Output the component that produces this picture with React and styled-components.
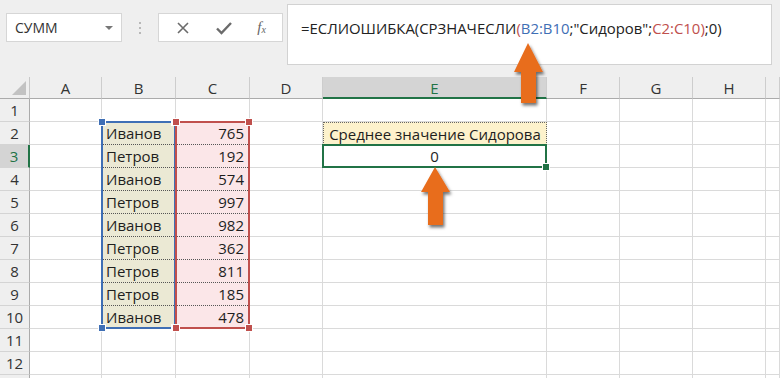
import React from "react";
import styled, { createGlobalStyle } from "styled-components";

const GlobalStyle = createGlobalStyle`
  html, body {
    margin: 0;
    padding: 0;
    background: #efefef;
    font-family: "Open Sans", "Liberation Sans", sans-serif;
    overflow: hidden;
  }
`;

const columns = ["A", "B", "C", "D", "E", "F", "G", "H", ""];
const data = [
  ["Иванов", 765],
  ["Петров", 192],
  ["Иванов", 574],
  ["Петров", 997],
  ["Иванов", 982],
  ["Петров", 362],
  ["Петров", 811],
  ["Петров", 185],
  ["Иванов", 478],
];

function App() {
  const rows = Array.from({ length: 13 }, (_, i) => i + 1);

  return (
    <Page>
      <GlobalStyle />
      <Toolbar>
        <NameBox>
          <span>СУММ</span>
          <Caret />
        </NameBox>
        <Grip>
          <i />
          <i />
          <i />
        </Grip>
        <ButtonBox>
          <ToolIcon>
            <svg width="16" height="16" viewBox="0 0 16 16">
              <path d="M3 3 L13 13 M13 3 L3 13" stroke="#6b6b6b" strokeWidth="1.6" fill="none" />
            </svg>
          </ToolIcon>
          <ToolIcon>
            <svg width="18" height="16" viewBox="0 0 18 16">
              <path d="M2 8.5 L6.5 13 L16 3" stroke="#6b6b6b" strokeWidth="2.4" fill="none" />
            </svg>
          </ToolIcon>
          <Fx>
            f<sub>x</sub>
          </Fx>
        </ButtonBox>
        <FormulaBar>
          =ЕСЛИОШИБКА(СРЗНАЧЕСЛИ<Ref color="#c0504d">(</Ref>
          <Ref color="#3f6fb5">B2:B10</Ref>;"Сидоров";
          <Ref color="#c0504d">C2:C10</Ref>
          <Ref color="#c0504d">)</Ref>;0)
        </FormulaBar>
      </Toolbar>

      <SheetWrap>
        <Sheet>
          <Corner />
          {columns.map((c, i) => (
            <ColHeader key={c + i} $active={c === "E"}>
              {c}
            </ColHeader>
          ))}

          {rows.map((r) => (
            <React.Fragment key={r}>
              <RowHeader $active={r === 3}>{r <= 12 ? r : ""}</RowHeader>
              {columns.map((c, ci) => {
                const d = data[r - 2];
                if (c === "B" && d)
                  return (
                    <NameCell key={ci} $last={r === 10}>
                      {d[0]}
                    </NameCell>
                  );
                if (c === "C" && d)
                  return (
                    <ValueCell key={ci} $last={r === 10}>
                      {d[1]}
                    </ValueCell>
                  );
                if (c === "E" && r === 2)
                  return <TitleCell key={ci}>Среднее значение Сидорова</TitleCell>;
                if (c === "E" && r === 3)
                  return <ResultCell key={ci}>0</ResultCell>;
                return <Cell key={ci} />;
              })}
            </React.Fragment>
          ))}
        </Sheet>

        <Overlay>
          <Range $col={3} $color="#3f6fb5">
            <Handle $pos="tl" />
            <Handle $pos="tr" />
            <Handle $pos="bl" />
            <Handle $pos="br" />
          </Range>
          <Range $col={4} $color="#c0504d">
            <Handle $pos="tl" />
            <Handle $pos="tr" />
            <Handle $pos="bl" />
            <Handle $pos="br" />
          </Range>
          <Selection>
            <Handle $pos="br" $color="#217346" />
          </Selection>
        </Overlay>
      </SheetWrap>

      <Arrow style={{ left: 511, top: 41 }} />
      <Arrow style={{ left: 418, top: 165 }} short />
    </Page>
  );
}

function Arrow({ style, short }) {
  const h = short ? 60 : 62;
  const base = short ? 27 : 31;
  const id = short ? "s2" : "s1";
  return (
    <ArrowSvg style={style} width="40" height={h + 6} viewBox={`0 0 40 ${h + 6}`}>
      <defs>
        <filter id={id} x="-30%" y="-20%" width="160%" height="150%">
          <feDropShadow dx="1.5" dy="2.5" stdDeviation="1.8" floodColor="#000" floodOpacity="0.55" />
        </filter>
      </defs>
      <path
        d={`M17 2 L32 ${base} L25 ${base} L25 ${h} L10 ${h} L10 ${base} L3 ${base} Z`}
        fill="#e86d1f"
        filter={`url(#${id})`}
      />
    </ArrowSvg>
  );
}

export default App;

const Page = styled.div`
  position: relative;
  width: 780px;
  height: 378px;
  overflow: hidden;
`;

const Toolbar = styled.div`
  display: flex;
  align-items: flex-start;
  height: 77px;
  padding-left: 6px;
  box-sizing: border-box;
`;

const NameBox = styled.div`
  margin-top: 13px;
  width: 116px;
  height: 29px;
  box-sizing: border-box;
  background: #fff;
  border: 1px solid #d6d6d6;
  display: flex;
  align-items: center;
  justify-content: space-between;
  padding: 0 8px 0 8px;
  font-size: 14px;
  color: #333;
`;

const Caret = styled.span`
  width: 0;
  height: 0;
  border-left: 4px solid transparent;
  border-right: 4px solid transparent;
  border-top: 4px solid #777;
`;

const Grip = styled.div`
  width: 36px;
  margin-top: 22px;
  display: flex;
  flex-direction: column;
  align-items: center;
  gap: 3px;

  i {
    width: 2px;
    height: 2px;
    background: #b8b8b8;
  }
`;

const ButtonBox = styled.div`
  margin-top: 13px;
  width: 125px;
  height: 29px;
  box-sizing: border-box;
  background: #fff;
  border: 1px solid #d6d6d6;
  display: flex;
  align-items: center;
  justify-content: space-around;
  padding: 0 4px;
`;

const ToolIcon = styled.span`
  display: flex;
  align-items: center;
`;

const Fx = styled.span`
  font-family: "Liberation Serif", serif;
  font-style: italic;
  font-size: 15px;
  color: #666;
  line-height: 1;

  sub {
    font-size: 10px;
    vertical-align: -1px;
  }
`;

const FormulaBar = styled.div`
  margin-top: 4px;
  margin-left: 4px;
  width: 485px;
  height: 61px;
  box-sizing: border-box;
  background: #fff;
  border: 1px solid #d2d2d2;
  padding: 13px 0 0 13px;
  font-size: 14.9px;
  color: #222;
  white-space: nowrap;
`;

const Ref = styled.span`
  color: ${(p) => p.color};
`;

const SheetWrap = styled.div`
  position: relative;
`;

const gridTemplate = `
  display: grid;
  grid-template-columns: 30px 72px 74px 74px 73px 224px 73px 73px 73px 1fr;
  grid-template-rows: 22px repeat(13, 23px);
`;

const Sheet = styled.div`
  ${gridTemplate}
  background: #fff;
`;

const Overlay = styled.div`
  ${gridTemplate}
  position: absolute;
  inset: 0;
  pointer-events: none;
`;

const Corner = styled.div`
  position: relative;
  background: #efefef;
  border-bottom: 1px solid #ababab;
  border-right: 1px solid #c8c8c8;
  box-sizing: border-box;

  &::after {
    content: "";
    position: absolute;
    right: 3px;
    bottom: 3px;
    border-left: 14px solid transparent;
    border-bottom: 14px solid #c2c2c2;
  }
`;

const ColHeader = styled.div`
  background: ${(p) => (p.$active ? "#d4d4d4" : "#efefef")};
  border-right: 1px solid #cdcdcd;
  border-bottom: ${(p) => (p.$active ? "2px solid #217346" : "1px solid #ababab")};
  box-sizing: border-box;
  display: flex;
  align-items: center;
  justify-content: center;
  font-size: 15px;
  color: ${(p) => (p.$active ? "#217346" : "#333")};
  padding-top: 1px;
`;

const RowHeader = styled.div`
  background: ${(p) => (p.$active ? "#d4d4d4" : "#efefef")};
  border-bottom: 1px solid #d4d4d4;
  border-right: ${(p) => (p.$active ? "2px solid #217346" : "1px solid #ababab")};
  box-sizing: border-box;
  display: flex;
  align-items: center;
  justify-content: center;
  font-size: 15px;
  color: ${(p) => (p.$active ? "#217346" : "#333")};
`;

const Cell = styled.div`
  border-right: 1px solid #dadada;
  border-bottom: 1px solid #dadada;
  box-sizing: border-box;
  display: flex;
  align-items: center;
  font-size: 15px;
  color: #1e1e1e;
  white-space: nowrap;
`;

const NameCell = styled(Cell)`
  background: #ebe9d4;
  padding-left: 4px;
  border-bottom: ${(p) => (p.$last ? "1px solid #dadada" : "1px dotted #555")};
`;

const ValueCell = styled(Cell)`
  background: #fbe6e8;
  justify-content: flex-end;
  padding-right: 5px;
  border-bottom: ${(p) => (p.$last ? "1px solid #dadada" : "1px dotted #555")};
`;

const TitleCell = styled(Cell)`
  background: #fdf2cc;
  justify-content: center;
  border: 1px dotted #666;
`;

const ResultCell = styled(Cell)`
  justify-content: center;
`;

const Range = styled.div`
  grid-column: ${(p) => p.$col};
  grid-row: 3 / 12;
  position: relative;
  margin: -1px 0 0 -1px;
  border: 2px solid ${(p) => p.$color};
  color: ${(p) => p.$color};
`;

const Selection = styled.div`
  grid-column: 6;
  grid-row: 4;
  position: relative;
  margin: -1px 0 0 -1px;
  border: 2px solid #217346;
`;

const Handle = styled.span`
  position: absolute;
  width: 6px;
  height: 6px;
  background: ${(p) => p.$color || "currentColor"};
  border: 1px solid #fff;
  ${(p) => (p.$pos[0] === "t" ? "top: -5px;" : "bottom: -5px;")}
  ${(p) => (p.$pos[1] === "l" ? "left: -5px;" : "right: -5px;")}
`;

const ArrowSvg = styled.svg`
  position: absolute;
  pointer-events: none;
`;
